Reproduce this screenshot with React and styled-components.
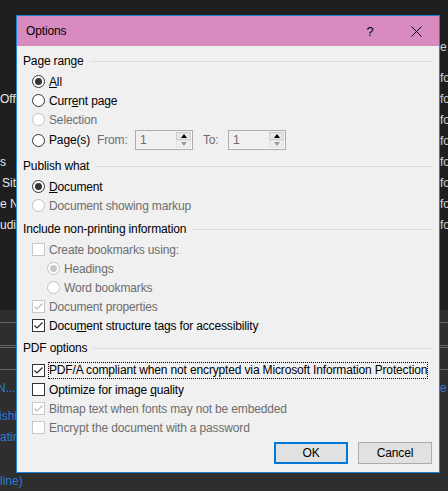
import React from 'react'
import styled, { createGlobalStyle } from 'styled-components'

const GlobalStyle = createGlobalStyle`
  html, body {
    margin: 0;
    padding: 0;
  }
  body {
    background: #1e1e1e;
    font-family: "Liberation Sans", Arial, sans-serif;
  }
`

const Screen = styled.div`
  position: relative;
  width: 448px;
  height: 491px;
  overflow: hidden;
  display: flex;
  flex-direction: column;
  font-family: "Liberation Sans", Arial, sans-serif;
  font-size: 12px;
`

/* --- the editor behind the dialog --- */

const TopBand = styled.div`
  height: 318px;
  box-sizing: border-box;
  padding-top: 36px;
  background: #1e1e1e;
`

const BottomBand = styled.div`
  flex: 1;
  background: #2e2e2e;
`

const BgRow = styled.div`
  display: flex;
  justify-content: space-between;
  align-items: center;
  height: 21px;
  margin-top: ${p => p.$before || 0}px;
  margin-bottom: ${p => p.$after || 0}px;
`

const BgLeft = styled.span`
  margin-left: ${p => p.$shift || 0}px;
  white-space: nowrap;
  color: ${p => (p.$link ? '#2c7ad6' : '#e8e8e8')};
`

const BgRight = styled.span`
  width: 8px;
  overflow: hidden;
  white-space: nowrap;
  color: ${p => (p.$link ? '#2c7ad6' : '#c9d6d6')};
`

const Rule = styled.div`
  height: 1px;
  margin-top: ${p => p.$before || 0}px;
  background: #646464;
`

/* --- dialog --- */

const Dialog = styled.div`
  position: absolute;
  left: 16px;
  top: 15px;
  width: 424px;
  height: 458px;
  box-sizing: border-box;
  border: 1px solid #1883d7;
  background: #f0f0f0;
  display: flex;
  flex-direction: column;
  color: #000;
  letter-spacing: -0.15px;
`

const TitleBar = styled.div`
  display: flex;
  align-items: center;
  height: 30px;
  padding-left: 9px;
  background: #d78bbf;
`

const Title = styled.span`
  flex: 1;
  font-size: 12px;
`

const TitleButton = styled.div`
  width: 46px;
  height: 30px;
  display: flex;
  align-items: center;
  justify-content: center;
  font-size: 13px;
`

const Body = styled.div`
  padding: 5px 7px 0 6px;
  display: flex;
  flex-direction: column;
`

const Section = styled.div`
  display: flex;
  flex-direction: column;
  margin-top: ${p => p.$gap || 0}px;
`

const GroupHeader = styled.div`
  display: flex;
  align-items: center;
  gap: 6px;
  height: 20px;
  padding-bottom: ${p => p.$low || 1}px;
  &::after {
    content: '';
    flex: 1;
    height: 1px;
    background: #dcdcdc;
  }
`

const OptionRow = styled.div`
  display: flex;
  align-items: center;
  gap: 4px;
  height: ${p => (p.$tall ? 22 : 19)}px;
  padding-left: ${p => p.$indent || 9}px;
  color: ${p => (p.$disabled ? '#6d6d6d' : '#000')};
  white-space: nowrap;
`

const Label = styled.span`
  width: ${p => (p.$width ? `${p.$width}px` : 'auto')};
  margin-left: ${p => p.$shift || 0}px;
  color: ${p => (p.$muted ? '#6d6d6d' : 'inherit')};
`

const FocusLabel = styled.span`
  margin-left: -1px;
  border: 1px dotted #000;
  line-height: 15px;
`

const RadioDot = styled.span`
  box-sizing: border-box;
  width: 13px;
  height: 13px;
  flex: none;
  border-radius: 50%;
  border: 1px solid ${p => (p.$disabled ? '#c2c2c2' : '#333')};
  background: #fff;
  display: flex;
  align-items: center;
  justify-content: center;
  &::after {
    content: '';
    display: ${p => (p.$checked ? 'block' : 'none')};
    width: 7px;
    height: 7px;
    border-radius: 50%;
    background: ${p => (p.$disabled ? '#c8c8c8' : '#333')};
  }
`

const CheckBox = styled.span`
  box-sizing: border-box;
  width: 13px;
  height: 13px;
  flex: none;
  border: 1px solid ${p => (p.$disabled ? '#c8c8c8' : '#333')};
  background: #fff;
  display: flex;
  align-items: center;
  justify-content: center;
`

const Spin = styled.div`
  box-sizing: border-box;
  display: flex;
  width: 58px;
  height: 20px;
  border: 1px solid #adadad;
  background: #f0f0f0;
  box-shadow: inset -1px -1px 0 #fafafa;
`

const SpinValue = styled.span`
  flex: 1;
  padding-left: 4px;
  line-height: 19px;
  color: #6d6d6d;
`

const SpinButtons = styled.div`
  width: 15px;
  display: flex;
  flex-direction: column;
  margin: 1px 1px 1px 0;
`

const SpinArrow = styled.div`
  flex: 1;
  display: flex;
  align-items: center;
  justify-content: center;
  box-sizing: border-box;
  border: 1px solid ${p => (p.$up ? '#cfcfcf' : '#e2e2e2')};
  background: ${p => (p.$up ? '#e6e6e6' : '#efefef')};
  &::after {
    content: '';
    border-left: 3.5px solid transparent;
    border-right: 3.5px solid transparent;
    ${p =>
      p.$up
        ? 'border-bottom: 4px solid #000;'
        : 'border-top: 4px solid #9a9a9a;'}
  }
`

const Footer = styled.div`
  margin-top: auto;
  display: flex;
  justify-content: flex-end;
  gap: 10px;
  padding: 0 7px 8px 0;
`

const DialogButton = styled.button`
  box-sizing: border-box;
  width: 74px;
  height: 22px;
  padding: 0;
  font-family: inherit;
  font-size: 12px;
  letter-spacing: inherit;
  color: #000;
  background: #e1e1e1;
  border: ${p => (p.$primary ? '2px solid #0078d7' : '1px solid #adadad')};
`

const Radio = ({ checked, disabled, indent, children }) => (
  <OptionRow $indent={indent} $disabled={disabled}>
    <RadioDot $checked={checked} $disabled={disabled} />
    <Label>{children}</Label>
  </OptionRow>
)

const Check = ({ checked, disabled, focus, children }) => (
  <OptionRow $disabled={disabled}>
    <CheckBox $disabled={disabled}>
      {checked && (
        <svg width="11" height="11" viewBox="0 0 11 11">
          <path
            d="M1.5 5.5 L4 8 L9.5 2.5"
            fill="none"
            stroke={disabled ? '#b8b8b8' : '#222'}
            strokeWidth="1.1"
          />
        </svg>
      )}
    </CheckBox>
    {focus ? <FocusLabel>{children}</FocusLabel> : <Label>{children}</Label>}
  </OptionRow>
)

const SpinBox = ({ value }) => (
  <Spin>
    <SpinValue>{value}</SpinValue>
    <SpinButtons>
      <SpinArrow $up />
      <SpinArrow />
    </SpinButtons>
  </Spin>
)

const rightLines = ['fo', 'fo', 'fo', 'fo', 'fo', 'fo', 'fo', 'fo']
const leftLines = { 1: ['Office', 0], 4: ['s', 0], 5: ['Sites', 2], 6: ['e Notes', 0], 7: ['udio', 0] }

export default function App() {
  return (
    <>
      <GlobalStyle />
      <Screen>
        <TopBand>
          <BgRow $after={10}>
            <span />
            <BgRight>e</BgRight>
          </BgRow>
          {rightLines.map((word, i) => (
            <BgRow key={i}>
              {leftLines[i] ? (
                <BgLeft $shift={leftLines[i][1]}>{leftLines[i][0]}</BgLeft>
              ) : (
                <span />
              )}
              <BgRight>{word}</BgRight>
            </BgRow>
          ))}
        </TopBand>
        <BottomBand>
          <Rule $before={12} />
          <Rule $before={22} />
          <Rule $before={1} />
          <Rule $before={21} />
          <BgRow $before={7}>
            <BgLeft $link $shift={-3}>N...</BgLeft>
            <BgRight $link>e</BgRight>
          </BgRow>
          <BgRow $before={7}>
            <BgLeft $link $shift={-1}>ishing</BgLeft>
          </BgRow>
          <BgRow>
            <BgLeft $link>ating</BgLeft>
          </BgRow>
          <BgRow $before={23}>
            <BgLeft $link>line)</BgLeft>
          </BgRow>
        </BottomBand>

        <Dialog>
          <TitleBar>
            <Title>Options</Title>
            <TitleButton>?</TitleButton>
            <TitleButton>
              <svg width="11" height="11" viewBox="0 0 11 11">
                <path d="M0.5 0.5 L10.5 10.5 M10.5 0.5 L0.5 10.5" stroke="#000" strokeWidth="1" />
              </svg>
            </TitleButton>
          </TitleBar>

          <Body>
            <Section>
              <GroupHeader>Page range</GroupHeader>
              <Radio checked><u>A</u>ll</Radio>
              <Radio>Curr<u>e</u>nt page</Radio>
              <Radio disabled>Selection</Radio>
              <OptionRow $tall>
                <RadioDot />
                <Label $width={44}>Pa<u>g</u>e(s)</Label>
                <Label $width={34} $muted>From:</Label>
                <SpinBox value="1" />
                <Label $width={21} $shift={6} $muted>To:</Label>
                <SpinBox value="1" />
              </OptionRow>
            </Section>

            <Section $gap={5}>
              <GroupHeader>Publish what</GroupHeader>
              <Radio checked><u>D</u>ocument</Radio>
              <Radio disabled>Document showing markup</Radio>
            </Section>

            <Section $gap={4}>
              <GroupHeader>Include non-printing information</GroupHeader>
              <Check disabled>Create bookmarks using:</Check>
              <Radio disabled checked indent={24}>Headings</Radio>
              <Radio disabled indent={24}>Word bookmarks</Radio>
              <Check disabled checked>Document properties</Check>
              <Check checked>Docu<u>m</u>ent structure tags for accessibility</Check>
            </Section>

            <Section $gap={3}>
              <GroupHeader $low={3}>PDF options</GroupHeader>
              <Check checked focus>
                PDF/A compliant when not encrypted via Microsoft Information Protection
              </Check>
              <Check>Optimize for image <u>q</u>uality</Check>
              <Check disabled checked>Bitmap text when fonts may not be embedded</Check>
              <Check disabled>Encrypt the document with a password</Check>
            </Section>
          </Body>

          <Footer>
            <DialogButton $primary>OK</DialogButton>
            <DialogButton>Cancel</DialogButton>
          </Footer>
        </Dialog>
      </Screen>
    </>
  )
}
